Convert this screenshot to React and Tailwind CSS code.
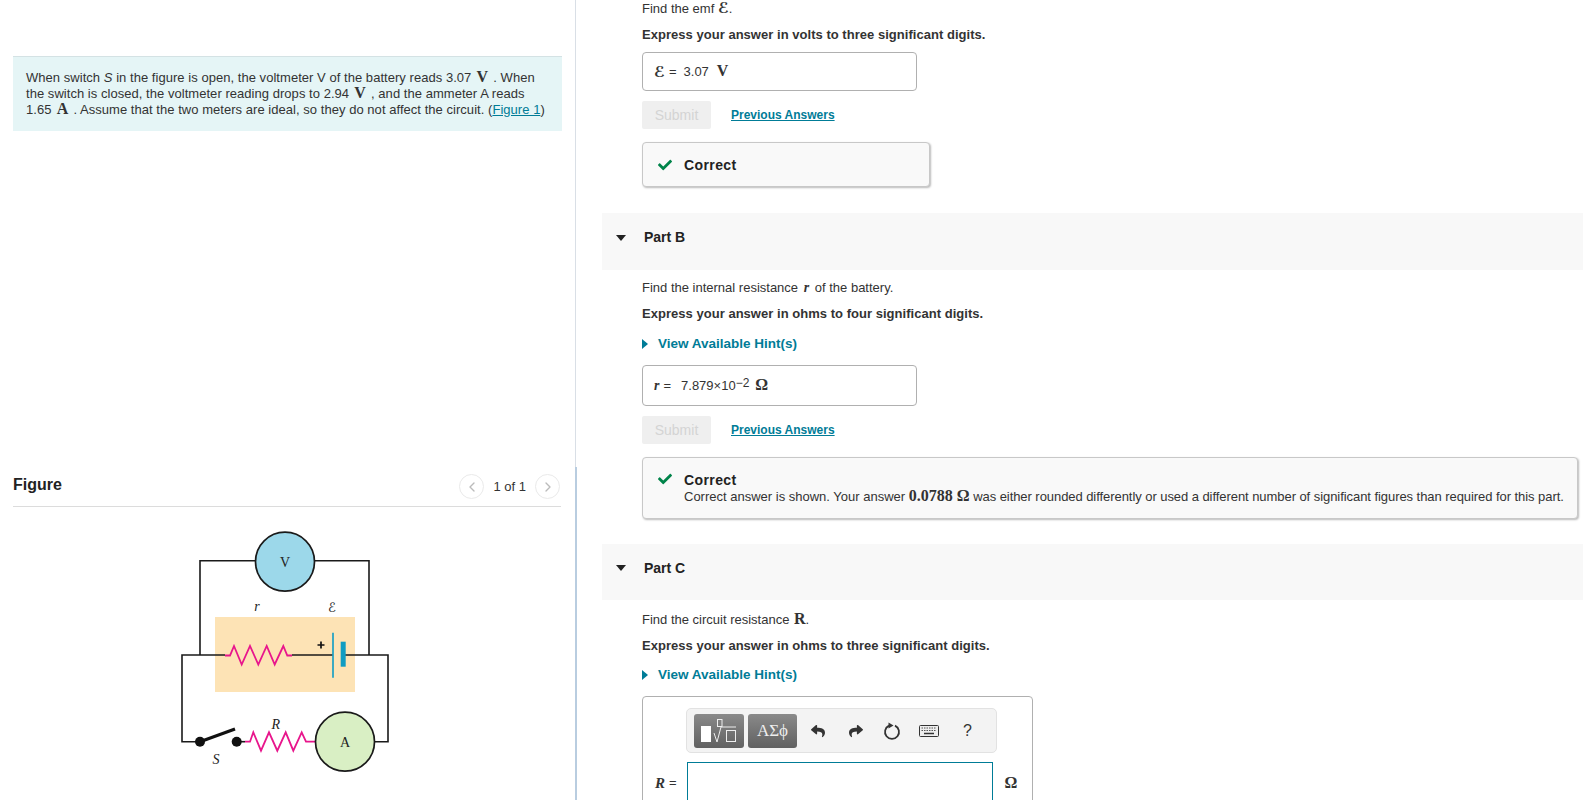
import { ChevronLeft, ChevronRight } from "lucide-react";
import { FaCheck, FaReply, FaShare } from "react-icons/fa";

const serif = "font-['Liberation_Serif','DejaVu_Serif',serif]";

function Caret() {
  return <span className="inline-block w-0 h-0 border-y-[5px] border-y-transparent border-l-[6px] border-l-[#007c97]" />;
}

function Unit({ children }) {
  return <span className={`${serif} font-bold text-[16px]`}>{children}</span>;
}

function ParaUnit({ children }) {
  return <span className={`${serif} font-bold text-[16px] leading-none mx-[1.5px]`}>{children}</span>;
}

function Script() {
  return <span className="font-['DejaVu_Sans',sans-serif] font-bold text-[15px] leading-[16px]">ℰ</span>;
}

function SubmitRow() {
  return (
    <div className="flex items-center h-[28px]">
      <div className="w-[69px] h-[28px] bg-[#efefef] text-[#d4d4d4] text-[14px] flex items-center justify-center rounded-[2px]">Submit</div>
      <a className="ml-[20px] -mt-[1px] text-[12px] font-bold text-[#007c97] underline">Previous Answers</a>
    </div>
  );
}

function PartBar({ label, className }) {
  return (
    <div className={`ml-[25px] bg-[#f8f8f8] flex items-center pl-[14px] pb-[8px] ${className}`}>
      <span className="w-0 h-0 border-x-[5px] border-x-transparent border-t-[6px] border-t-[#222]" />
      <span className="ml-[18px] text-[14px] font-bold text-[#222]">{label}</span>
    </div>
  );
}

function Hint({ className }) {
  return (
    <div className={`flex items-center text-[#007c97] text-[13.5px] font-bold ${className}`}>
      <Caret />
      <span className="ml-[10px]">View Available Hint(s)</span>
    </div>
  );
}

function Circuit() {
  return (
    <svg width="270" height="290" viewBox="0 0 270 290" className="ml-[137px] mt-[4px] block">
      <rect x="65" y="106" width="140" height="75" fill="#fde3b5" />
      <g fill="none" stroke="#1a1a1a" strokeWidth="1.6">
        <path d="M50 144V49.7H219V144" />
        <path d="M75 144H32V230.7H50" />
        <path d="M142 144H183" />
        <path d="M195 144H238V230.7H225" />
        <path d="M87 230.7H95" />
      </g>
      <g fill="none" stroke="#e8168c" strokeWidth="1.8">
        <path d="M75 144.5H80L84 135L91.7 153.5L100 135L108.3 153.5L116.7 135L124.7 153.5L133.3 135L137.3 144.5H142" />
        <path d="M95 230.7H100L103.3 221.3L111 239.7L119 221.3L127.3 239.7L135.7 221.3L143.3 239.7L151.7 221.3L156 230.7H165" />
      </g>
      <circle cx="135" cy="50.7" r="29.5" fill="#9cd8ea" stroke="#1a1a1a" strokeWidth="1.7" />
      <circle cx="195" cy="230.7" r="29.5" fill="#d9efc4" stroke="#1a1a1a" strokeWidth="1.7" />
      <path d="M183 121.7V166.7" stroke="#1aa0c4" strokeWidth="1.7" />
      <rect x="190.7" y="130.7" width="5" height="25" fill="#0f9cc2" />
      <circle cx="50" cy="230.7" r="5" fill="#111" />
      <circle cx="86.7" cy="230.7" r="5" fill="#111" />
      <path d="M50 230.7L85 218" stroke="#111" strokeWidth="3.2" />
      <path d="M167.5 134H174.5M171 130.5V137.5" stroke="#111" strokeWidth="1.7" />
      <g fontFamily="Liberation Serif" fontSize="14" fill="#222" textAnchor="middle">
        <text x="135" y="56">V</text>
        <text x="195" y="236">A</text>
        <text x="107" y="100" fontStyle="italic">r</text>
        <text x="182" y="101" fontFamily="DejaVu Sans" fontSize="13">ℰ</text>
        <text x="125.7" y="217.5" fontStyle="italic">R</text>
        <text x="66" y="253" fontStyle="italic">S</text>
      </g>
    </svg>
  );
}

function Toolbar() {
  return (
    <div className="ml-[43px] mt-[11px] w-[311px] h-[45px] bg-[#f3f3f3] border border-[#e2e2e2] rounded-[5px] flex items-center pl-[7px]">
      <div className="w-[50px] h-[34px] rounded-[3px] bg-gradient-to-b from-[#8a8a8a] to-[#616161] flex items-center justify-center">
        <svg width="40" height="28" viewBox="0 0 40 28">
          <rect x="2" y="9" width="10" height="16" fill="#fff" />
          <g fill="none" stroke="#eee" strokeWidth="1">
            <rect x="18.5" y="2.5" width="4.5" height="7" />
            <path d="M15 16L18 25L22 10H37" />
            <rect x="27.5" y="13.5" width="9" height="11" />
          </g>
        </svg>
      </div>
      <div className={`ml-[4px] w-[49px] h-[34px] rounded-[3px] bg-gradient-to-b from-[#8a8a8a] to-[#616161] flex items-center justify-center text-[#eee] text-[17px] ${serif}`}>ΑΣϕ</div>
      <FaReply className="ml-[14px] text-[#333] text-[14px]" />
      <FaShare className="ml-[24px] text-[#333] text-[14px]" />
      <svg className="ml-[20px]" width="18" height="18" viewBox="0 0 18 18">
        <path d="M12 3.6A7 7 0 1 1 6 3.6" fill="none" stroke="#333" strokeWidth="1.8" />
        <path d="M5.5 0.5L10.5 3.5L5.5 6.5Z" fill="#333" />
      </svg>
      <svg className="ml-[18px]" width="20" height="12" viewBox="0 0 20 12">
        <rect x="0.5" y="0.5" width="19" height="11" rx="1" fill="#eee" stroke="#333" />
        <path d="M2.5 3H17.5M2.5 5.5H17.5" stroke="#555" strokeWidth="1.2" strokeDasharray="1.5 1" />
        <path d="M5 8.5H15" stroke="#333" strokeWidth="1.5" />
      </svg>
      <span className="ml-[24px] text-[#333] text-[16px]">?</span>
    </div>
  );
}

export default function App() {
  return (
    <div className="h-[800px] overflow-hidden bg-white flex font-['Liberation_Sans',Arial,sans-serif] text-[#333]">
      {/* left panel */}
      <div className="w-[575px] shrink-0 pl-[13px] pr-[14px] pt-[56px]">
        <div className="w-[549px] h-[75px] bg-[#e5f5f6] border-t border-[#d4e2e4] px-[13px] pt-[12px] text-[13px] leading-[15px] tracking-[0.04px] whitespace-nowrap">
          When switch <i>S</i> in the figure is open, the voltmeter V of the battery reads 3.07 <ParaUnit>V</ParaUnit> . When
          <br />
          the switch is closed, the voltmeter reading drops to 2.94 <ParaUnit>V</ParaUnit> , and the ammeter A reads
          <br />
          1.65 <ParaUnit>A</ParaUnit> . Assume that the two meters are ideal, so they do not affect the circuit. (<a className="text-[#007c97] underline">Figure 1</a>)
        </div>
        <div className="mt-[336px] h-[40px] border-b border-[#dcdcdc] flex items-center justify-between w-[548px]">
          <span className="text-[16px] font-bold text-[#222] -mt-[4px]">Figure</span>
          <div className="flex items-center text-[13px] mr-[1px]">
            <span className="w-[25px] h-[25px] rounded-full border border-[#eaeaea] flex items-center justify-center text-[#bbb]"><ChevronLeft size={16} /></span>
            <span className="mx-[9px] pt-[1px]">1 of 1</span>
            <span className="w-[25px] h-[25px] rounded-full border border-[#eaeaea] flex items-center justify-center text-[#bbb]"><ChevronRight size={16} /></span>
          </div>
        </div>
        <Circuit />
      </div>

      {/* divider */}
      <div className="w-[2px] shrink-0 flex flex-col">
        <div className="h-[467px] w-px bg-[#d9dfe6]" />
        <div className="flex-1 bg-[#b9cde0]" />
      </div>

      {/* right panel */}
      <div className="flex-1 min-w-0 text-[13px]">
        <div className="ml-[65px]">
          <p className="h-[16px] leading-[16px]">Find the emf <Script />.</p>
          <p className="mt-[11px] h-[16px] leading-[16px] text-[13px] font-bold tracking-[0.03px]">Express your answer in volts to three significant digits.</p>
          <div className="mt-[9px] w-[275px] h-[39px] border border-[#b0b0b0] rounded-[4px] flex items-center pl-[11px]">
            <Script /><span className="ml-[4px]">=</span><span className="ml-[7px]">3.07</span><span className="ml-[8px] -mt-[2px]"><Unit>V</Unit></span>
          </div>
          <div className="mt-[10px]"><SubmitRow /></div>
          <div className="mt-[13px] w-[288px] h-[45px] bg-[#f9f9f9] border border-[#c8c8c8] rounded-[4px] shadow-[1px_1px_2px_#bbb] flex items-center pl-[15px]">
            <FaCheck className="text-[#00844a] text-[14px]" />
            <span className="ml-[12px] pt-[1px] text-[14px] tracking-[0.4px] font-bold text-[#222]">Correct</span>
          </div>
        </div>

        <PartBar label="Part B" className="mt-[26px] h-[57px]" />

        <div className="ml-[65px]">
          <p className="mt-[10px] h-[16px] leading-[16px]">Find the internal resistance <span className={`${serif} italic font-bold text-[14px] mx-[2px]`}>r</span> of the battery.</p>
          <p className="mt-[10px] h-[16px] leading-[16px] text-[13px] font-bold tracking-[0.03px]">Express your answer in ohms to four significant digits.</p>
          <Hint className="mt-[14px] h-[16px]" />
          <div className="mt-[13px] w-[275px] h-[41px] border border-[#b0b0b0] rounded-[4px] flex items-center pl-[11px]">
            <span className={`${serif} italic font-bold text-[14px]`}>r</span><span className="ml-[4px]">=</span><span className="ml-[10px]">7.879×10<sup className="text-[12px] -top-[3px] align-baseline">−2</sup></span><span className="ml-[6px] -mt-[2px]"><Unit>Ω</Unit></span>
          </div>
          <div className="mt-[10px]"><SubmitRow /></div>
          <div className="mt-[13px] mr-[5px] h-[62px] bg-[#f9f9f9] border border-[#c8c8c8] rounded-[4px] shadow-[1px_1px_2px_#bbb] flex pl-[15px] pt-[14px]">
            <FaCheck className="text-[#00844a] text-[14px]" />
            <div className="ml-[12px]">
              <div className="text-[14px] tracking-[0.4px] font-bold text-[#222] leading-[16px]">Correct</div>
              <div className="leading-[16px] whitespace-nowrap">Correct answer is shown. Your answer <span className={`${serif} font-bold text-[16px]`}>0.0788 Ω</span> <span className="tracking-[-0.06px]">was either rounded differently or used a different number of significant figures than required for this part.</span></div>
            </div>
          </div>
        </div>

        <PartBar label="Part C" className="mt-[25px] h-[56px]" />

        <div className="ml-[65px]">
          <p className="mt-[11px] h-[16px] leading-[16px]">Find the circuit resistance <span className={`${serif} font-bold text-[16px] ml-[1px]`}>R</span>.</p>
          <p className="mt-[11px] h-[16px] leading-[16px] text-[13px] font-bold tracking-[0.03px]">Express your answer in ohms to three significant digits.</p>
          <Hint className="mt-[13px] h-[16px]" />
          <div className="mt-[13px] w-[391px] h-[130px] border border-[#b0b0b0] rounded-[4px]">
            <Toolbar />
            <div className="mt-[9px] flex items-center pl-[12px]">
              <span className={`${serif} italic font-bold text-[15px]`}>R</span>
              <span className="ml-[4px] text-[13px]">=</span>
              <div className="ml-[10px] w-[306px] h-[42px] border border-[#007c97] bg-white" />
              <span className={`ml-[12px] ${serif} font-bold text-[16px]`}>Ω</span>
            </div>
          </div>
        </div>
      </div>
    </div>
  );
}
